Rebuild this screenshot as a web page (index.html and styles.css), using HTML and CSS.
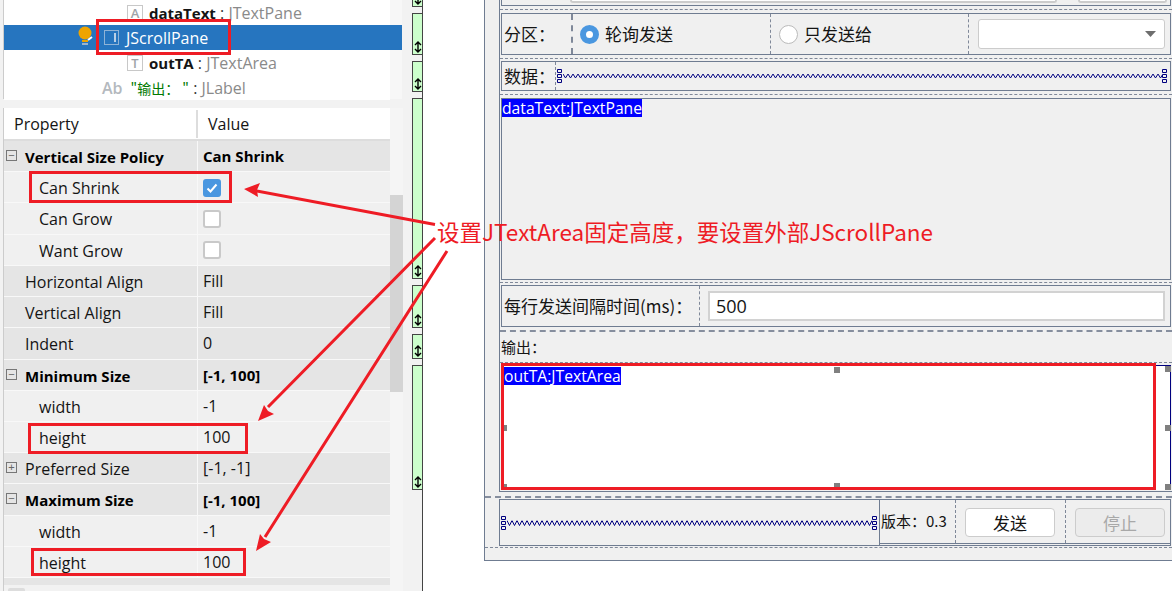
FILE: index.html
```html
<!DOCTYPE html>
<html lang="zh">
<head>
<meta charset="utf-8">
<title>JScrollPane</title>
<link rel="stylesheet" href="styles.css">
</head>
<body>
<div class="page">
  <section class="left">
    <div class="tree">
      <div class="node node-a"><span class="ti">A</span><b>dataText</b><span class="colon">&nbsp;:&nbsp;</span><span class="ty">JTextPane</span></div>
      <div class="node node-sel">
        <svg class="bulb" width="15" height="20" viewBox="0 0 15 20"><circle cx="7" cy="7" r="6.5" fill="#eea400"/><path d="M4 14h6v2H4z" fill="#eea400"/><path d="M4 17h6v2H4z" fill="#9db4cc"/><path d="M10 14l4-3" stroke="#fff" stroke-width="2"/></svg>
        <svg class="si" width="15" height="15" viewBox="0 0 15 15"><rect x=".5" y=".5" width="14" height="14" fill="none" stroke="#8fb3d6"/><rect x="10" y="3" width="2" height="9" fill="#b9d0e6"/></svg>
        <span>JScrollPane</span>
      </div>
      <div class="node node-a"><span class="ti">T</span><b>outTA</b><span class="colon">&nbsp;:&nbsp;</span><span class="ty">JTextArea</span></div>
      <div class="node node-l"><span class="ab">Ab</span><span class="gr">"输出： "</span><span class="colon">&nbsp;:&nbsp;</span><span class="ty">JLabel</span></div>
    </div>
    <div class="props-wrap">
      <div class="props">
        <div class="head"><div class="h1">Property</div><div class="h2">Value</div></div>
        <div class="row grp bold"><i class="tog">−</i><div class="k">Vertical Size Policy</div><div class="v">Can Shrink</div></div>
        <div class="row sub"><div class="k">Can Shrink</div><div class="v"><span class="cb on"><svg width="14" height="14" viewBox="0 0 14 14"><path d="M2.5 7.5l3 3 6-7" fill="none" stroke="#fff" stroke-width="2"/></svg></span></div></div>
        <div class="row sub"><div class="k">Can Grow</div><div class="v"><span class="cb"></span></div></div>
        <div class="row sub"><div class="k">Want Grow</div><div class="v"><span class="cb"></span></div></div>
        <div class="row grp"><div class="k">Horizontal Align</div><div class="v">Fill</div></div>
        <div class="row grp"><div class="k">Vertical Align</div><div class="v">Fill</div></div>
        <div class="row grp"><div class="k">Indent</div><div class="v">0</div></div>
        <div class="row grp bold"><i class="tog">−</i><div class="k">Minimum Size</div><div class="v">[-1, 100]</div></div>
        <div class="row sub"><div class="k">width</div><div class="v">-1</div></div>
        <div class="row sub"><div class="k">height</div><div class="v">100</div></div>
        <div class="row grp"><i class="tog">+</i><div class="k">Preferred Size</div><div class="v">[-1, -1]</div></div>
        <div class="row grp bold"><i class="tog">−</i><div class="k">Maximum Size</div><div class="v">[-1, 100]</div></div>
        <div class="row sub"><div class="k">width</div><div class="v">-1</div></div>
        <div class="row sub"><div class="k">height</div><div class="v">100</div></div>
        <div class="row-end"></div>
        <div class="h-thumb"></div>
      </div>
      <div class="vbar"><div class="vthumb"></div></div>
    </div>
  </section>
  <div class="strip"></div>
  <div class="gutter">
    <div class="seg s0"><svg class="rz" width="8" height="12" viewBox="0 0 8 12"><path d="M4 1v10M1 4l3-3 3 3M1 8l3 3 3-3" fill="none" stroke="#000" stroke-width="1.4"/></svg></div>
    <div class="seg s1"><svg class="rz" width="8" height="12" viewBox="0 0 8 12"><path d="M4 1v10M1 4l3-3 3 3M1 8l3 3 3-3" fill="none" stroke="#000" stroke-width="1.4"/></svg></div>
    <div class="seg s2"><svg class="rz" width="8" height="12" viewBox="0 0 8 12"><path d="M4 1v10M1 4l3-3 3 3M1 8l3 3 3-3" fill="none" stroke="#000" stroke-width="1.4"/></svg></div>
    <div class="seg s3"><svg class="rz" width="8" height="12" viewBox="0 0 8 12"><path d="M4 1v10M1 4l3-3 3 3M1 8l3 3 3-3" fill="none" stroke="#000" stroke-width="1.4"/></svg></div>
    <div class="seg s4"><svg class="rz" width="8" height="12" viewBox="0 0 8 12"><path d="M4 1v10M1 4l3-3 3 3M1 8l3 3 3-3" fill="none" stroke="#000" stroke-width="1.4"/></svg></div>
    <div class="seg s5"><svg class="rz" width="8" height="12" viewBox="0 0 8 12"><path d="M4 1v10M1 4l3-3 3 3M1 8l3 3 3-3" fill="none" stroke="#000" stroke-width="1.4"/></svg></div>
    <div class="seg s6"><svg class="rz" width="8" height="12" viewBox="0 0 8 12"><path d="M4 1v10M1 4l3-3 3 3M1 8l3 3 3-3" fill="none" stroke="#000" stroke-width="1.4"/></svg></div>
  </div>
  <div class="blank"></div>
  <section class="form">
    <div class="col">
      <div class="box toprow"><span class="cut c1"></span><span class="cut c2"></span></div>
      <div class="dash d-a"></div>
      <div class="box r42">
        <div class="cell c-label cjk">分区：</div>
        <div class="cell c-radio cjk"><span class="radio on"></span>轮询发送</div>
        <div class="cell c-radio2 cjk"><span class="radio"></span>只发送给</div>
        <div class="cell c-combo"><div class="combo"><svg width="11" height="6" viewBox="0 0 11 6"><path d="M0 0h11L5.500 6z" fill="#6e6e6e"/></svg></div></div>
      </div>
      <div class="dash d-b"></div>
      <div class="box r30">
        <div class="cell c-data cjk">数据：</div>
        <div class="cell c-spring">
          <svg class="hd" width="6" height="14" viewBox="0 0 6 14"><path d="M.5.500h4v3h-4zM.5 5.500h4v3h-4zM.5 10.500h4v3h-4z" fill="none" stroke="#00007f"/></svg>
          <svg class="spring" height="6"><defs><pattern id="z1" width="5" height="6" patternUnits="userSpaceOnUse"><path d="M0 1l2.500 4L5 1" fill="none" stroke="#00007f"/></pattern></defs><rect width="100%" height="6" fill="url(#z1)"/></svg>
          <svg class="hd" width="6" height="14" viewBox="0 0 6 14"><path d="M.5.500h4v3h-4zM.5 5.500h4v3h-4zM.5 10.500h4v3h-4z" fill="none" stroke="#00007f"/></svg>
        </div>
      </div>
      <div class="dash d-c"></div>
      <div class="box pane"><span class="tag">dataText:JTextPane</span></div>
      <div class="dash d-d"></div>
      <div class="box r42">
        <div class="cell c-ms cjk">每行发送间隔时间(ms)：</div>
        <div class="cell c-input"><div class="input">500</div></div>
      </div>
      <div class="dash thick d-e"></div>
      <div class="out-label cjk">输出：</div>
      <div class="dash d-f"></div>
      <div class="out">
        <span class="tag tag-out">outTA:JTextArea</span>
        <i class="hdl h-tc"></i><i class="hdl h-tr"></i><i class="hdl h-ml"></i><i class="hdl h-mr"></i><i class="hdl h-bl"></i><i class="hdl h-bc"></i><i class="hdl h-br"></i>
      </div>
    </div>
    <div class="dash thick d-g"></div>
    <div class="bar">
      <div class="bar-spring">
        <svg class="hd" width="6" height="14" viewBox="0 0 6 14"><path d="M.5.500h4v3h-4zM.5 5.500h4v3h-4zM.5 10.500h4v3h-4z" fill="none" stroke="#00007f"/></svg>
        <svg class="spring" height="6"><defs><pattern id="z2" width="5" height="6" patternUnits="userSpaceOnUse"><path d="M0 .5l2.500 5L5 .5" fill="none" stroke="#00007f"/></pattern></defs><rect width="100%" height="6" fill="url(#z2)"/></svg>
        <svg class="hd" width="6" height="14" viewBox="0 0 6 14"><path d="M.5.500h4v3h-4zM.5 5.500h4v3h-4zM.5 10.500h4v3h-4z" fill="none" stroke="#00007f"/></svg>
      </div>
      <div class="bar-right">
        <div class="ver cjk">版本：0.3</div>
        <div class="bcell cjk"><div class="btn">发送</div></div>
        <div class="bcell cjk"><div class="btn off">停止</div></div>
      </div>
    </div>
    <div class="dash d-h"></div>
  </section>

  <svg class="anno" width="1172" height="591" viewBox="0 0 1172 591">
    <g fill="none" stroke="#ee1c25" stroke-width="3">
      <rect x="97.500" y="20.500" width="132" height="33"/>
      <rect x="30.500" y="172.500" width="200" height="29"/>
      <rect x="29.500" y="424.500" width="217" height="28"/>
      <rect x="32.500" y="549.500" width="212" height="25"/>
      <rect x="502.500" y="364.500" width="652" height="124"/>
      <path d="M254 190.500L435 224.500M268 407L435 238M265 537L447 251"/>
    </g>
    <g fill="#ee1c25">
      <path d="M244 189l16-6-3 7 1 7z"/>
      <path d="M258 421l6-16 4 6 6 3z"/>
      <path d="M256 551l4-17 4 5 7 3z"/>
    </g>
  </svg>
  <div class="note cjk">设置JTextArea固定高度，要设置外部JScrollPane</div>
</div>
</body>
</html>
```
FILE: styles.css
```css
* { box-sizing: border-box; }
html, body { margin: 0; padding: 0; background: #fff; }
.page {
  position: relative;
  display: flex;
  width: 1172px;
  height: 591px;
  overflow: hidden;
  font-family: "Open Sans", "Noto Sans CJK SC", sans-serif;
  font-size: 16px;
  color: #141414;
}
.cjk { font-family: "Noto Sans CJK SC", "Open Sans", sans-serif; }

/* left panel */
.left {
  width: 403px;
  flex: none;
  height: 591px;
  padding-left: 3px;
  background: #f2f2f2;
  display: flex;
  flex-direction: column;
}
.tree { height: 99px; border-left: 1px solid #ccc; margin-right: 1px; background: #f7f7f7; flex: none; }
.node { height: 25px; display: flex; align-items: center; background: #fff; width: 386px; white-space: nowrap; }
.node b { font-size: 15px; }
.node-a { padding-left: 123px; }
.node-l { padding-left: 98px; }
.node-sel { background: #2675bf; color: #fff; width: 398px; padding-left: 74px; }
.bulb { margin-right: 11px; margin-top: -4px; }
.si { margin-right: 7px; }
.ti {
  width: 16px; height: 16px; margin-right: 6px;
  border: 1px solid #c8c8c8; color: #a0a4a8;
  font-size: 13px; line-height: 14px; text-align: center; font-weight: 600;
}
.ty { color: #8a8a8a; }
.colon { color: #333; }
.ab { color: #b4b9be; font-weight: 600; margin-right: 8px; }
.gr { color: #007a00; font-family: "Noto Sans CJK SC", sans-serif; font-size: 14px; }
.props-wrap { flex: 1; display: flex; margin-top: 9px; min-height: 0; }
.props { width: 387px; flex: none; border-left: 1px solid #ccc; }
.head { height: 33px; background: #fff; display: flex; align-items: center; border-bottom: 2px solid #ddd; }
.h1 { width: 194px; padding-left: 10px; border-right: 2px solid #ddd; height: 28px; line-height: 28px; }
.h2 { padding-left: 10px; }
.row {
  position: relative;
  height: 31.23px;
  display: flex;
  align-items: center;
  border-bottom: 1px solid #f8f8f8;
}
.grp { background: #e5e5e5; }
.sub { background: #f0f0f0; }
.bold { font-weight: 700; font-size: 15px; color: #000; }
.k { width: 194px; padding-left: 21px; border-right: 1px solid #f8f8f8; height: 100%; line-height: 32px; white-space: nowrap; flex: none; }
.sub .k { padding-left: 35px; }
.v { padding-left: 5px; line-height: 32px; }
.tog {
  position: absolute; left: 2px; top: 9px;
  width: 11px; height: 11px;
  border: 1px solid #777; color: #666;
  font: normal 11px/9px "Liberation Sans", sans-serif;
  text-align: center;
}
.cb {
  display: block; width: 18px; height: 18px; margin-top: 1px;
  background: #fff; border: 2px solid #c9c9c9; border-radius: 3px;
}
.cb.on { background: #4a97e0; border-color: #4a97e0; position: relative; }
.cb svg { display: block; margin: 0; }
.row-end { height: 7px; background: #e5e5e5; }
.h-thumb { width: 17px; height: 6px; margin: 3px 0 0 4px; background: #ddd; border-radius: 2px; }
.vbar { width: 13px; flex: none; background: #f5f5f5; padding-top: 87px; }
.vthumb { height: 197px; background: #d4d4d4; }

/* gutter */
.strip { width: 9px; flex: none; background: #f2f2f2; }
.gutter {
  width: 11px; flex: none;
  background: #f2f2f2;
  border-right: 1px solid #444;
  display: flex; flex-direction: column; gap: 6px;
  height: 591px;
}
.seg {
  background: #ccffcc;
  border: 1px solid #444;
  border-right: 0;
  display: flex; flex-direction: column; justify-content: flex-end; align-items: center;
  overflow: hidden;
  padding-bottom: 1px;
}
.rz { flex: none; }
.s0 { height: 7px; border-top: 0; }
.s1 { height: 42px; }
.s2 { height: 31px; }
.s3 { height: 181px; }
.s4 { height: 43px; }
.s5 { height: 25px; }
.s6 { height: 125px; }
.blank { width: 61px; flex: none; }

/* form */
.form {
  width: 688px;
  height: 561px;
  flex: none;
  background: #f0f0f0;
  border-left: 1px solid #6f7c91;
  border-bottom: 1px solid #6f7c91;
}
.col { margin-left: 14px; height: 492px; border-left: 1px solid #6f7c91; border-bottom: 1px solid #6f7c91; }
.box { border: 1px solid #6f7c91; margin: 0 1px; display: flex; align-items: stretch; }
.toprow { height: 6px; border-top: 0; position: relative; overflow: hidden; }
.cut { height: 3px; background: #fff; border: 2px solid #ccc; border-top: 0; border-radius: 0 0 4px 4px; }
.c1 { width: 487px; margin-left: 68px; }
.c2 { width: 89px; margin-left: 21px; }
.dash { border-top: 1px dashed #7f8899; }
.thick { border-top: 2px dashed #868e9e; }
.d-a { margin: 3px 0; }
.d-b { margin: 3px 0 2px; }
.d-c { margin: 3px 0; }
.d-d { margin: 2px 0; }
.d-e { margin-top: 3px; }
.d-f { margin-bottom: 2px; }
.d-g { margin: 4px 0 1px; }
.d-h { margin-top: 1px; }
.r42 { height: 42px; }
.r30 { height: 30px; }
.cell { display: flex; align-items: center; font-size: 17px; line-height: 26px; white-space: nowrap; }
.c-label { width: 71px; padding-left: 2px; border-right: 2px dashed #7f8899; }
.c-radio { width: 198px; padding-left: 7px; border-right: 1px dashed #7f8899; }
.c-radio2 { width: 198px; padding-left: 8px; border-right: 1px dashed #7f8899; }
.c-combo { flex: 1; padding: 0 5px 0 9px; }
.combo {
  width: 100%; height: 30px; background: #fff;
  border: 1px solid #ccc; border-radius: 3px;
  display: flex; align-items: center; justify-content: flex-end; padding-right: 8px;
}
.radio {
  width: 19px; height: 19px; margin-right: 6px; border-radius: 50%;
  background: #fff; border: 1px solid #bbb;
}
.radio.on { background: #fff; border: 6px solid #4a97e0; }
.c-data { width: 54px; padding-left: 2px; border-right: 1px dashed #7f8899; }
.c-spring { flex: 1; padding: 0 2px 0 1px; gap: 0; }
.hd { flex: none; }
.spring { flex: 1; min-width: 0; }
.pane { height: 182px; display: block; }
.tag {
  display: inline-block; vertical-align: top;
  height: 18px; line-height: 18px;
  background: #00f; color: #fff;
  font-family: "Open Sans", sans-serif; font-size: 15.700px;
  white-space: nowrap;
}
.c-ms { width: 198px; padding-left: 2px; font-size: 17px; border-right: 1px dashed #7f8899; }
.c-input { flex: 1; padding: 0 5px 0 8px; }
.input {
  width: 100%; height: 30px; background: #fff;
  border: 2px solid #d2d2d2; font: 18px/26px "Open Sans", sans-serif; padding-left: 6px;
}
.out-label { height: 30px; padding: 3px 0 0 1px; font-size: 15px; line-height: 24px; }
.out { position: relative; height: 125px; margin: 0 1px; background: #fff; border: 1px solid #00007f; border-left: 0; border-bottom: 0; }
.tag-out { margin: 1px 0 0 3px; }
.hdl { position: absolute; width: 6px; height: 6px; background: #808080; }
.h-tc { left: 333px; top: 1px; }
.h-tr { right: -1px; top: 0; }
.h-ml { left: 0; top: 59px; }
.h-mr { right: -1px; top: 59px; }
.h-bl { left: 0; bottom: 0; }
.h-bc { left: 333px; bottom: 1px; }
.h-br { right: -1px; bottom: 0; }

/* bottom bar */
.bar {
  margin-left: 14px; margin-right: 1px;
  height: 47px;
  border: 1px solid #6f7c91;
  display: flex;
}
.bar-spring { width: 380px; flex: none; display: flex; align-items: center; padding: 0 1px; border-right: 1px solid #6f7c91; }
.bar-right { flex: 1; height: 44px; display: flex; border-bottom: 1px solid #6f7c91; }
.ver { width: 76px; border-right: 1px dashed #7f8899; line-height: 42px; font-size: 15px; padding-left: 1px; white-space: nowrap; }
.bcell { width: 110px; padding: 8px 10px 0 9px; font-size: 17px; border-right: 1px dashed #7f8899; }
.bcell:last-child { border-right: 0; width: auto; flex: 1; padding-right: 5px; }
.btn {
  height: 29px; line-height: 28px; text-align: center;
  background: #fff; border: 1px solid #ccc; border-radius: 4px;
}
.btn.off { background: #ececec; color: #a8a8a8; }

/* annotation */
.anno { position: absolute; left: 0; top: 0; }
.note {
  position: absolute; left: 437px; top: 214px;
  font-size: 22.500px; line-height: 34px; color: #ee1c25; white-space: nowrap;
}
```
